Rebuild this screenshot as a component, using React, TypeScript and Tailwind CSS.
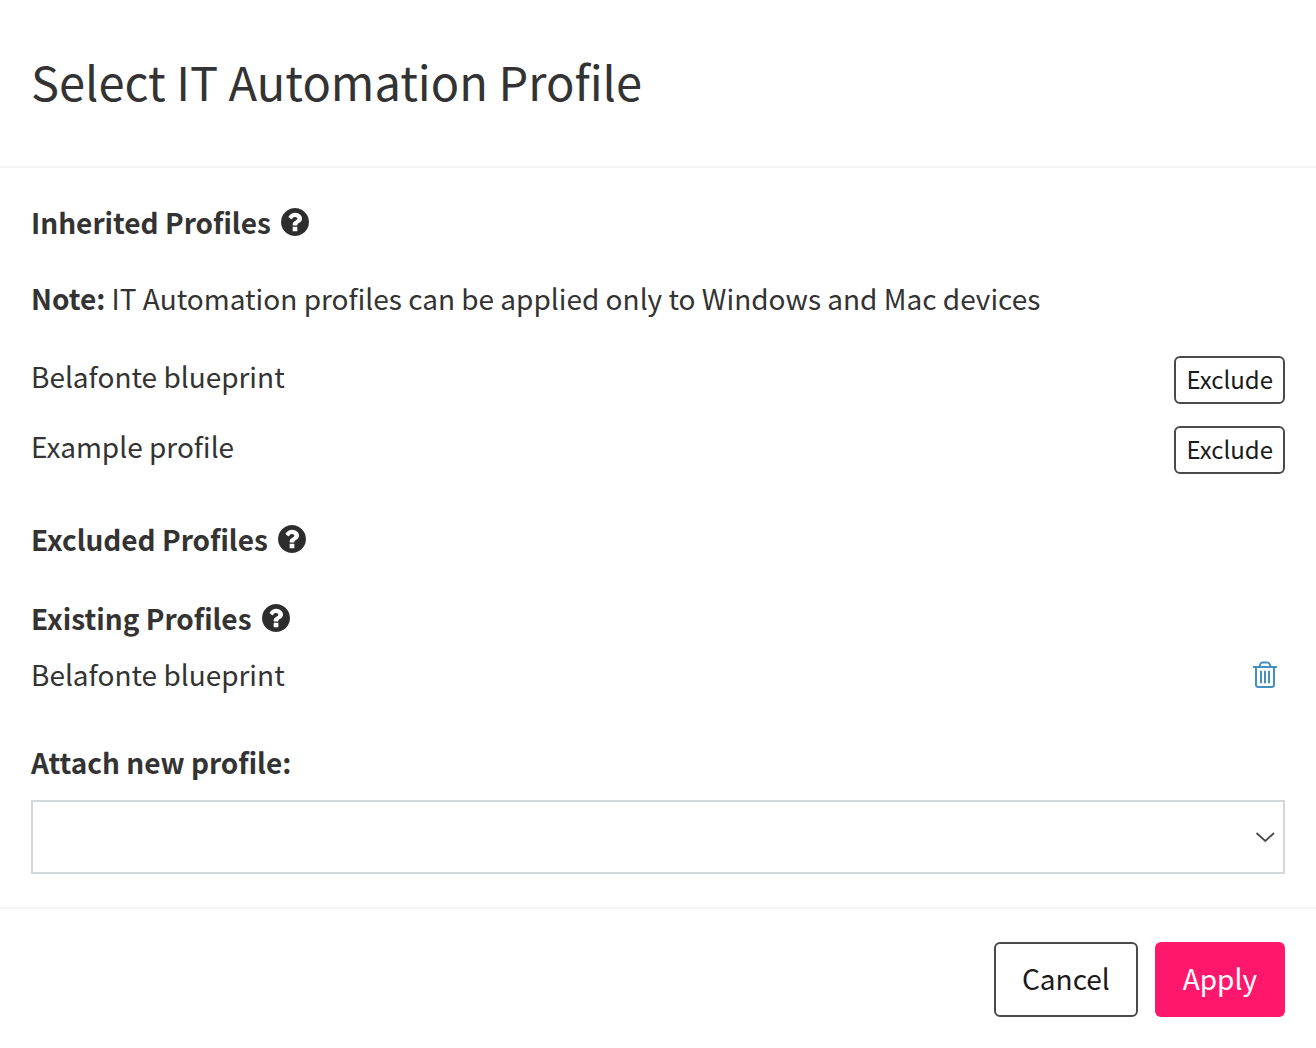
import { useState } from "react";

const inherited = ["Belafonte blueprint", "Example profile"];
const existing = ["Belafonte blueprint"];

function HelpIcon({ label }: { label: string }) {
  return (
    <button type="button" aria-label={label} className="shrink-0">
      <svg viewBox="0 128 1536 1536" className="size-7" fill="#2d2d2d">
        <path d="M896 1376v-192q0-14-9-23t-23-9h-192q-14 0-23 9t-9 23v192q0 14 9 23t23 9h192q14 0 23-9t9-23zM1152 704q0-88-55.500-163t-138.500-116-170-41q-243 0-371 213-15 24 8 42l132 100q7 6 19 6 16 0 25-12 53-68 86-92 34-24 86-24 48 0 85.500 26t37.500 59q0 38-20 61t-68 45q-63 28-115.500 86.500t-52.500 125.500v36q0 14 9 23t23 9h192q14 0 23-9t9-23q0-19 21.500-49.500t54.500-49.500q32-18 49-28.500t46-35 44.500-48 28-60.500 12.500-81zM1536 896q0 209-103 385.500t-279.500 279.500-385.500 103-385.500-103-279.500-279.500-103-385.500 103-385.500 279.500-279.500 385.500-103 385.500 103 279.500 279.500 103 385.500z" />
      </svg>
    </button>
  );
}

function TrashIcon() {
  return (
    <svg viewBox="0 0 24 28" className="h-7 w-6" fill="none" stroke="#4390bc" strokeWidth="2">
      <path d="M0 7h24" />
      <path d="M6.500 7l.6-2.600C7.500 3 8.300 2.500 9.500 2.500h5c1.200 0 2 .5 2.400 1.900L17.500 7" />
      <path d="M3 7v17.500c0 1.700.9 2.500 2.500 2.500h13c1.600 0 2.500-.8 2.500-2.500V7" />
      <path d="M8 11.500v11M12 11.500v11M16 11.500v11" strokeLinecap="round" />
    </svg>
  );
}

function SectionTitle({ children, help }: { children: string; help: string }) {
  return (
    <div className="flex items-center gap-[10px]">
      <h2 className="font-bold">{children}</h2>
      <HelpIcon label={help} />
    </div>
  );
}

export default function App() {
  const [profile, setProfile] = useState("");

  return (
    <main className="bg-white font-['Noto_Sans_CJK_SC',sans-serif] text-[28px] leading-[44px] text-[#333333]">
      {/* Header */}
      <header className="border-b-2 border-[#f3f3f3] px-[31px] pt-12 pb-[52px]">
        <h1 className="text-[47px] leading-[66px]">Select IT Automation Profile</h1>
      </header>

      {/* Profiles */}
      <section className="px-[31px] pt-8 pb-[33px]">
        <SectionTitle help="About inherited profiles">Inherited Profiles</SectionTitle>
        <p className="mt-8">
          <strong>Note:</strong> IT Automation profiles can be applied only to Windows and Mac devices
        </p>
        <ul className="mt-9 mb-[43px] flex flex-col gap-[22px]">
          {inherited.map((name) => (
            <li key={name} className="flex items-start justify-between">
              <span className="leading-10">{name}</span>
              <button
                type="button"
                className="h-12 rounded-md border-2 border-[#4a4a4a] px-[10px] pb-[2px] text-[24px] leading-[42px] text-[#1a1a1a]"
              >
                Exclude
              </button>
            </li>
          ))}
        </ul>

        <SectionTitle help="About excluded profiles">Excluded Profiles</SectionTitle>

        <div className="mt-[35px]">
          <SectionTitle help="About existing profiles">Existing Profiles</SectionTitle>
        </div>
        <ul className="mt-3 mb-11">
          {existing.map((name) => (
            <li key={name} className="flex items-center justify-between pr-2">
              <span>{name}</span>
              <button type="button" aria-label={`Remove ${name}`}>
                <TrashIcon />
              </button>
            </li>
          ))}
        </ul>

        <label htmlFor="profile" className="block font-bold">
          Attach new profile:
        </label>
        <div className="relative mt-4">
          <select
            id="profile"
            value={profile}
            onChange={(e) => setProfile(e.target.value)}
            className="block h-[74px] w-full appearance-none border-2 border-[#d3d6dc] bg-white px-4"
          >
            <option value=""></option>
            {inherited.map((name) => (
              <option key={name}>{name}</option>
            ))}
          </select>
          <svg
            viewBox="0 0 20 12"
            className="pointer-events-none absolute top-[31px] right-[10px] h-3 w-5"
            fill="none"
            stroke="#4a4a4a"
            strokeWidth="1.800"
          >
            <path d="M1.500 2 10.300 10l8.700-8" />
          </svg>
        </div>
      </section>

      {/* Actions */}
      <footer className="flex justify-end gap-[17px] border-t-2 border-[#f3f3f3] px-[31px] pt-[33px] pb-[31px]">
        <button
          type="button"
          className="h-[75px] rounded-md border-2 border-[#4a4a4a] px-[26px] pb-[3px] text-[#1a1a1a]"
        >
          Cancel
        </button>
        <button type="button" className="h-[75px] rounded-md bg-[#ff176b] px-7 pb-[3px] text-white">
          Apply
        </button>
      </footer>
    </main>
  );
}
